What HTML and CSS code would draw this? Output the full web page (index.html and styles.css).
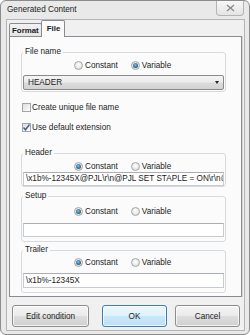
FILE: index.html
```html
<!DOCTYPE html>
<html lang="en">
<head>
  <meta charset="UTF-8">
  <title>Generated Content</title>
  <link rel="stylesheet" href="styles.css">
</head>
<body>

  <div class="window">
    <div class="titlebar">
      <span class="title">Generated Content</span>
      <span class="close">
        <svg width="9" height="8" viewBox="0 0 9 8">
          <path d="M1 1 L8 7 M8 1 L1 7" stroke="#8a8a8a" stroke-width="1.4" fill="none"/>
        </svg>
      </span>
    </div>

    <div class="client">
      <div class="tabs">
        <span class="tab">Format</span>
        <span class="tab active">File</span>
      </div>

      <div class="panel">
        <fieldset class="group group-file">
          <legend>File name</legend>
          <div class="radios">
            <span class="radio-item"><span class="radio"></span>Constant</span>
            <span class="radio-item"><span class="radio checked"></span>Variable</span>
          </div>
          <div class="select">HEADER<span class="arrow"></span></div>
        </fieldset>

        <div class="check first"><span class="box"></span>Create unique file name</div>
        <div class="check"><span class="box checked">
          <svg width="9" height="9" viewBox="0 0 9 9">
            <path d="M1.5 4.5 L3.5 6.8 L7.5 1.5" stroke="#4a5f97" stroke-width="1.5" fill="none"/>
          </svg>
        </span>Use default extension</div>

        <fieldset class="group group-header">
          <legend>Header</legend>
          <div class="radios">
            <span class="radio-item"><span class="radio checked"></span>Constant</span>
            <span class="radio-item"><span class="radio"></span>Variable</span>
          </div>
          <div class="textbox">\x1b%-12345X@PJL\r\n@PJL SET STAPLE = ON\r\n@PJL ENTER LANGUAGE = PCL\r\n</div>
        </fieldset>

        <fieldset class="group group-setup">
          <legend>Setup</legend>
          <div class="radios">
            <span class="radio-item"><span class="radio checked"></span>Constant</span>
            <span class="radio-item"><span class="radio"></span>Variable</span>
          </div>
          <div class="textbox"></div>
        </fieldset>

        <fieldset class="group group-trailer">
          <legend>Trailer</legend>
          <div class="radios">
            <span class="radio-item"><span class="radio checked"></span>Constant</span>
            <span class="radio-item"><span class="radio"></span>Variable</span>
          </div>
          <div class="textbox tall">\x1b%-12345X</div>
        </fieldset>
      </div>

      <div class="buttons">
        <button class="btn btn-edit">Edit condition</button>
        <button class="btn btn-ok">OK</button>
        <button class="btn btn-cancel">Cancel</button>
      </div>
    </div>
  </div>

</body>
</html>
```

FILE: styles.css
```css
body {
  margin: 0;
  background: #ffffff;
  font-family: "Liberation Sans", Arial, sans-serif;
  font-size: 8.2px;
  color: #1b1b1b;
}

.window {
  width: 250px;
  height: 335px;
  box-sizing: border-box;
  border: 1px solid #8c8c8c;
  border-radius: 6px;
  background: #e9e9e9;
  display: flex;
  flex-direction: column;
}

/* title bar */
.titlebar {
  height: 18px;
  display: flex;
  align-items: flex-start;
  padding-left: 6px;
}

.title {
  line-height: 18px;
}

.close {
  margin-left: auto;
  margin-right: 5px;
  width: 26px;
  height: 14px;
  border: 1px solid #b4b4b4;
  border-top: none;
  border-radius: 0 0 4px 4px;
  background: linear-gradient(#f7f7f7, #e4e4e4);
  display: flex;
  align-items: center;
  justify-content: center;
}

/* client area */
.client {
  margin: 0 4px 0 5px;
  height: 312px;
  box-sizing: border-box;
  border: 1px solid #b5b5b5;
  background: #f0f0f0;
  display: flex;
  flex-direction: column;
}

.tabs {
  display: flex;
  align-items: flex-end;
  height: 17px;
  padding-left: 2px;
  margin-bottom: -1px;
}

.tab {
  font-weight: bold;
  font-size: 7.9px;
  height: 14px;
  line-height: 13px;
  box-sizing: border-box;
  padding: 0 2px;
  border: 1px solid #898c95;
  border-bottom: none;
  border-radius: 2px 2px 0 0;
  background: linear-gradient(#f2f2f2, #e3e3e3);
  white-space: nowrap;
}

.tab.active {
  height: 17px;
  line-height: 15px;
  margin-left: -1px;
  padding: 0 4px 0 5px;
  background: #fbfbfb;
  position: relative;
}

.panel {
  margin-left: 2px;
  width: 233px;
  height: 261px;
  box-sizing: border-box;
  border: 1px solid #898c95;
  background: #fbfbfb;
  box-shadow: 1px 0 0 #d6d6d6;
  padding: 10px 0 0 11px;
}

/* group boxes */
.group {
  margin: 0;
  padding: 0;
  width: 205px;
  box-sizing: border-box;
  min-width: 0;
  border: 1px solid #d5dadf;
  border-radius: 3px;
}

.group legend {
  padding: 0 2px;
  margin-left: 1px;
  line-height: 10px;
}

.radios {
  display: flex;
  gap: 13px;
  padding-left: 52px;
  height: 11px;
  align-items: center;
  margin-top: 3px;
}

.radio-item {
  display: flex;
  align-items: center;
  gap: 2px;
}

.radio {
  width: 9px;
  height: 9px;
  box-sizing: border-box;
  border-radius: 50%;
  border: 1px solid #a3a5a7;
  background: radial-gradient(circle at 50% 40%, #ffffff, #d8d8d8);
  display: flex;
  align-items: center;
  justify-content: center;
}

.radio.checked::after {
  content: "";
  width: 5px;
  height: 5px;
  border-radius: 50%;
  background: radial-gradient(circle at 45% 40%, #7ec3e6, #1f5e86 70%);
}

.select {
  margin: 4px 1px 0 1px;
  height: 15px;
  box-sizing: border-box;
  border: 1px solid #8a8a8a;
  border-radius: 2px;
  background: linear-gradient(#f4f4f4, #ebebeb 48%, #dcdcdc 52%, #d2d2d2);
  padding-left: 4px;
  line-height: 13px;
  display: flex;
  align-items: center;
}

.arrow {
  margin-left: auto;
  margin-right: 4px;
  width: 0;
  height: 0;
  border-left: 2.5px solid transparent;
  border-right: 2.5px solid transparent;
  border-top: 3px solid #222222;
}

.textbox {
  margin: 0 1px;
  height: 14px;
  box-sizing: border-box;
  border: 1px solid #c7ccd3;
  border-top-color: #abadb3;
  background: #ffffff;
  padding-left: 2px;
  line-height: 12px;
  white-space: nowrap;
  overflow: hidden;
}

.textbox.tall {
  height: 15px;
  line-height: 13px;
}

.group-file .radios { margin-top: 3px; }
.group-file { padding-bottom: 1px; }

.group-header { margin-top: 15px; }

.group-setup { margin-top: 4px; padding-bottom: 4px; }
.group-setup .radios { margin-top: 5px; }
.group-setup .textbox { margin-top: 6px; }

.group-trailer { margin-top: 3px; padding-bottom: 4px; }
.group-trailer .radios { margin-top: 2px; }
.group-trailer .textbox { margin-top: 5px; }

/* check boxes */
.check {
  display: flex;
  align-items: center;
  gap: 1px;
  height: 12px;
  margin: 8px 0 0 1px;
}

.check.first {
  margin-top: 9px;
}

.box {
  width: 9px;
  height: 9px;
  box-sizing: border-box;
  border: 1px solid #a3a5a7;
  background: linear-gradient(135deg, #dcdcdc, #ffffff);
  display: flex;
}

.box svg {
  margin: -1px;
}

/* buttons */
.buttons {
  display: flex;
  padding-left: 5px;
  margin-top: 8px;
}

.btn {
  font-family: inherit;
  font-size: 8.2px;
  color: #1b1b1b;
  height: 22px;
  padding: 0;
  border: 1px solid #8d8d8d;
  border-radius: 3px;
  background: linear-gradient(#f4f4f4, #ebebeb 48%, #dddddd 52%, #d0d0d0);
  box-shadow: inset 0 0 0 1px rgba(255, 255, 255, 0.7);
}

.btn-edit {
  width: 77px;
}

.btn-ok {
  width: 65px;
  margin-left: 13px;
  border-color: #3c7fb1;
  background: linear-gradient(#eef8fd, #dff1fb 48%, #c8e7f8 52%, #bde0f5);
}

.btn-cancel {
  width: 65px;
  margin-left: 8px;
}
```
